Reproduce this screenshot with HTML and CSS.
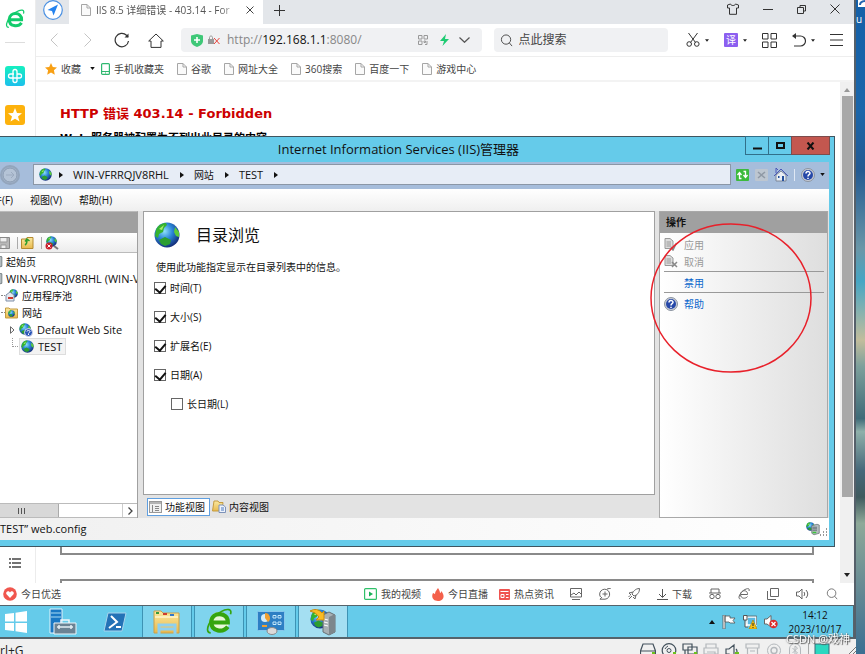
FILE: index.html
```html
<!DOCTYPE html>
<html lang="zh-CN">
<head>
    <meta charset="UTF-8">
    <meta name="viewport" content="width=device-width, initial-scale=1.0">
    <title>IIS 8.5 详细错误 - 403.14 - Forbidden</title>
    <link rel="stylesheet" href="styles.css">
</head>
<body>

    <!-- Shared icons -->
    <svg class="defs" aria-hidden="true">
        <defs>
            <radialGradient id="sea" cx="40%" cy="35%" r="70%">
                <stop offset="0" stop-color="#8fe0fb"/>
                <stop offset="0.45" stop-color="#2b86d8"/>
                <stop offset="1" stop-color="#10246f"/>
            </radialGradient>
            <linearGradient id="teal" x1="0" y1="0" x2="0" y2="1">
                <stop offset="0" stop-color="#16f0c0"/>
                <stop offset="1" stop-color="#1cc0ec"/>
            </linearGradient>
            <linearGradient id="paper" x1="0" y1="0" x2="0" y2="1">
                <stop offset="0" stop-color="#fbe9a0"/>
                <stop offset="1" stop-color="#e8b94c"/>
            </linearGradient>
        </defs>
        <symbol id="globe" viewBox="0 0 26 26">
            <circle cx="13" cy="13" r="12.5" fill="url(#sea)"/>
            <path d="M2 8C4 3 8 1 12 1L13 3L10 6L9 10L5 12L4 16L1 14Z" fill="#35b32f"/>
            <path d="M21 5L25 10L25 15L22 14L20 10Z" fill="#5ccb3a"/>
            <path d="M5 18L11 15L17 18L16 22L11 24L7 22Z" fill="#2c9e30"/>
            <path d="M5 7L10 3L8 8Z" fill="#a8ec6c"/>
        </symbol>
        <symbol id="doc" viewBox="0 0 10 12">
            <path d="M.5 .5H6L9.500 4V11.500H.5ZM6 .5V4H9.500" fill="#fafafa" stroke="#a6a6a6"/>
        </symbol>
        <symbol id="server" viewBox="0 0 12 14">
            <path d="M1 2L8 0L11 1V12L4 14L1 12Z" fill="#b4bcc0" stroke="#6a7478"/>
            <path d="M2 4H8M2 6H8M2 8H8" stroke="#53606a"/>
            <path d="M2 11H7" stroke="#3cc43c" stroke-width="2"/>
        </symbol>
        <symbol id="help" viewBox="0 0 14 14">
            <circle cx="7" cy="7" r="6.500" fill="#c8cdd6" stroke="#8c94a0"/>
            <circle cx="7" cy="7" r="5" fill="#2648a8"/>
            <path d="M5 5.500C5 3 9 3 9 5.300C9 6.800 7 6.600 7 8.500M7 9.700V11" fill="none" stroke="#fff" stroke-width="1.500"/>
        </symbol>
        <symbol id="caret" viewBox="0 0 6 4">
            <path d="M0 0H6L3 4Z" fill="currentColor"/>
        </symbol>
        <symbol id="arrow" viewBox="0 0 4 6">
            <path d="M0 0L4 3L0 6Z" fill="#111"/>
        </symbol>
        <symbol id="search" viewBox="0 0 14 14">
            <circle cx="6.500" cy="6" r="5" fill="none" stroke="currentColor"/>
            <path d="M10 9.500L13 13" stroke="currentColor"/>
        </symbol>
        <symbol id="browser-e" viewBox="0 0 26 26">
            <path d="M6 14H21.500C22 3.500 6 3 5.500 13.500C5.500 23 17 24 21.500 18" fill="none" stroke="currentColor" stroke-width="4"/>
            <path d="M5 24C-2 24 4 9 15 3.500C21 0 26 1 24 6" fill="none" stroke="currentColor" stroke-width="1.600"/>
        </symbol>
        <symbol id="browser-e-thin" viewBox="0 0 12 12">
            <path d="M3 6.500H9.500C10 1.500 3 1.500 2.500 6.500C2.500 11 8 11 9.500 8.500" fill="none" stroke="currentColor"/>
            <path d="M2.500 11C-1 11 2 4 7 1.500C10 0 12 .5 11 3" fill="none" stroke="currentColor"/>
        </symbol>
    </svg>

    <div class="screen">
        <div class="guest">

            <!-- Browser -->
            <div class="browser">
                <aside class="sidebar">
                    <a href="#" class="side-e" aria-label="浏览器"><svg width="20" height="22"><use href="#browser-e"/></svg></a>
                    <a href="#" class="side-tile" aria-label="健康">
                        <svg width="20" height="20" viewBox="0 0 20 20">
                            <rect width="20" height="20" rx="3" fill="url(#teal)"/>
                            <path d="M8 8V5.500A2 2 0 0 1 12 5.500V12M12 8H14.500A2 2 0 0 1 14.500 12H8M12 12V14.500A2 2 0 0 1 8 14.500V8M8 12H5.500A2 2 0 0 1 5.500 8H9" fill="none" stroke="#fff" stroke-width="1.300"/>
                        </svg>
                    </a>
                    <a href="#" class="side-tile" aria-label="收藏">
                        <svg width="20" height="20" viewBox="0 0 20 20">
                            <rect width="20" height="20" rx="3" fill="#fdb20c"/>
                            <path d="M10 3L12 8L17 8.300L13 11.500L14.500 16.500L10 13.700L5.500 16.500L7 11.500L3 8.300L8 8Z" fill="#fff"/>
                        </svg>
                    </a>
                    <button class="side-list" aria-label="列表">
                        <svg width="12" height="10" viewBox="0 0 12 10"><path d="M0 1H2M3 1H12M0 5H2M3 5H12M0 9H2M3 9H12" stroke="#444" stroke-width="1.500"/></svg>
                    </button>
                </aside>

                <div class="browser-main">
                    <div class="tabbar">
                        <button class="compass" aria-label="导航">
                            <svg width="20" height="20" viewBox="0 0 20 20"><circle cx="10" cy="10" r="9.300" fill="#fff" stroke="#4a90e2" stroke-width="1.200"/><path d="M15 4.500L4.500 10L9 11L10.500 15.500Z" fill="#2583ee"/></svg>
                        </button>
                        <div class="tab">
                            <svg width="10" height="12"><use href="#doc"/></svg>
                            <span class="tab-title">IIS 8.5 详细错误 - 403.14 - For</span>
                            <button aria-label="关闭标签">
                                <svg width="8" height="8" viewBox="0 0 8 8"><path d="M.5 .5L7.500 7.500M7.500 .5L.5 7.500" stroke="#444"/></svg>
                            </button>
                        </div>
                        <button class="new-tab" aria-label="新标签">
                            <svg width="11" height="11" viewBox="0 0 11 11"><path d="M5.500 0V11M0 5.500H11" stroke="#333"/></svg>
                        </button>
                        <div class="window-buttons">
                            <button aria-label="皮肤"><svg width="12" height="12" viewBox="0 0 12 12"><path d="M3.500 1C4 3 8 3 8.500 1L11.500 2V5H9.500V11.300H2.500V5H.5V2Z" fill="none" stroke="#333"/></svg></button>
                            <button aria-label="最小化"><svg width="12" height="12" viewBox="0 0 12 12"><path d="M1 6.500H11" stroke="#333"/></svg></button>
                            <button aria-label="还原"><svg width="10" height="10" viewBox="0 0 10 10"><path d="M.5 3.500H6.500V9.500H.5ZM3 3V1.500H8.500V7H7" fill="none" stroke="#333"/></svg></button>
                            <button aria-label="关闭"><svg width="10" height="10" viewBox="0 0 10 10"><path d="M.5 .5L9.500 9.500M9.500 .5L.5 9.500" stroke="#333"/></svg></button>
                        </div>
                    </div>

                    <div class="toolbar">
                        <div class="nav-buttons">
                            <button aria-label="后退"><svg width="8" height="14" viewBox="0 0 8 14"><path d="M7.500 .5L1 7L7.500 13.500" fill="none" stroke="#c4c4c4"/></svg></button>
                            <button aria-label="前进"><svg width="8" height="14" viewBox="0 0 8 14"><path d="M.5 .5L7 7L.5 13.500" fill="none" stroke="#c4c4c4"/></svg></button>
                            <button aria-label="刷新"><svg width="16" height="16" viewBox="0 0 16 16"><path d="M14.500 9A6.700 6.700 0 1 1 12.500 3.200L14 5" fill="none" stroke="#333" stroke-width="1.200"/><path d="M14.500 1.500V5.500H10.500Z" fill="#333"/></svg></button>
                            <button aria-label="主页"><svg width="16" height="15" viewBox="0 0 16 15"><path d="M.7 8L8 1L15.300 8H13V14.400H3V8Z" fill="none" stroke="#333"/></svg></button>
                        </div>
                        <div class="address">
                            <svg width="12" height="13" viewBox="0 0 12 13"><path d="M0 1.500L6 0L12 1.500V7C12 10 9 12 6 13C3 12 0 10 0 7Z" fill="#3fc878"/><path d="M6 3V9M3 6H9" stroke="#fff" stroke-width="1.600"/></svg>
                            <svg width="12" height="10" viewBox="0 0 12 10"><path d="M0 4H6V9H0Z" fill="#999"/><path d="M1.500 4V2.500C1.500 .5 4.500 .5 4.500 2.500V4" fill="none" stroke="#999"/><path d="M6 3L11.500 9M11.500 3L6 9" stroke="#e8443c"/></svg>
                            <label class="url"><span>http://</span><input type="text" value="192.168.1.1" aria-label="地址"><span>:8080/</span></label>
                            <svg width="10" height="10" viewBox="0 0 10 10"><path d="M.5 .5H4V4H.5ZM6 .5H9.500V4H6ZM.5 6H4V9.500H.5ZM6 6H7.500V7.500H6ZM9 6V9.500H7" fill="none" stroke="#999"/></svg>
                            <svg class="bolt" width="9" height="12" viewBox="0 0 9 12"><path d="M6 0L0 7H4L2.500 12L9 5H5Z" fill="#1ecb72"/></svg>
                            <button aria-label="展开地址"><svg width="11" height="6" viewBox="0 0 11 6"><path d="M.5 .5L5.500 5.300L10.500 .5" fill="none" stroke="#555" stroke-width="1.200"/></svg></button>
                        </div>
                        <label class="search-box">
                            <svg width="13" height="13"><use href="#search"/></svg>
                            <input type="text" value="点此搜索" aria-label="搜索">
                        </label>
                        <div class="tools">
                            <button aria-label="截图">
                                <svg width="14" height="14" viewBox="0 0 14 14"><path d="M2.500 0L9.500 9.500M11.500 0L4.500 9.500" stroke="#333"/><circle cx="3.200" cy="11" r="2.300" fill="none" stroke="#333"/><circle cx="10.800" cy="11" r="2.300" fill="none" stroke="#333"/></svg>
                                <svg width="4" height="3"><use href="#caret"/></svg>
                            </button>
                            <button aria-label="翻译">
                                <span class="translate">译</span>
                                <svg width="4" height="3"><use href="#caret"/></svg>
                            </button>
                            <button aria-label="应用"><svg width="15" height="15" viewBox="0 0 15 15"><path d="M.5 .5H6V6H.5ZM9 .5H14.500V6H9ZM.5 9H6V14.500H.5ZM9 9H14.500V14.500H9Z" fill="none" stroke="#333"/></svg></button>
                            <button aria-label="撤销">
                                <svg width="14" height="14" viewBox="0 0 14 14"><path d="M1 3H8.500A5 5 0 0 1 8.500 13H2" fill="none" stroke="#333" stroke-width="1.200"/><path d="M0 3L4 0V6Z" fill="#333"/></svg>
                                <svg width="4" height="3"><use href="#caret"/></svg>
                            </button>
                            <button aria-label="菜单"><svg width="13" height="12" viewBox="0 0 13 12"><path d="M0 .5H13M0 6H13M0 11.500H13" stroke="#333"/></svg></button>
                        </div>
                    </div>

                    <nav class="bookmarks">
                        <a href="#"><svg width="12" height="12" viewBox="0 0 12 12"><path d="M6 0L7.800 4L12 4.400L8.900 7.300L9.800 11.700L6 9.400L2.200 11.700L3.100 7.300L0 4.400L4.200 4Z" fill="#f8a014"/></svg>收藏</a>
                        <svg class="fav-caret" width="5" height="3"><use href="#caret"/></svg>
                        <a href="#"><svg width="9" height="12" viewBox="0 0 9 12"><rect x=".6" y=".6" width="7.800" height="10.800" rx="1" fill="none" stroke="#30b870" stroke-width="1.200"/><path d="M1 8.500H8M4 10H5" stroke="#30b870"/></svg>手机收藏夹</a>
                        <a href="#"><svg width="10" height="12"><use href="#doc"/></svg>谷歌</a>
                        <a href="#"><svg width="10" height="12"><use href="#doc"/></svg>网址大全</a>
                        <a href="#"><svg width="10" height="12"><use href="#doc"/></svg>360搜索</a>
                        <a href="#"><svg width="10" height="12"><use href="#doc"/></svg>百度一下</a>
                        <a href="#"><svg width="10" height="12"><use href="#doc"/></svg>游戏中心</a>
                    </nav>

                    <div class="viewport">
                        <main class="error-page">
                            <h1>HTTP 错误 403.14 - Forbidden</h1>
                            <h2>Web 服务器被配置为不列出此目录的内容。</h2>
                            <div class="error-box"></div>
                            <div class="error-box next"></div>
                        </main>
                        <div class="scrollbar">
                            <svg width="6" height="4" viewBox="0 0 6 4"><path d="M0 4L3 0L6 4Z" fill="#999"/></svg>
                            <div class="thumb"></div>
                            <svg class="down" width="6" height="4"><use href="#caret"/></svg>
                        </div>
                    </div>
                </div>
            </div>

            <div class="bottom-bar">
                <a href="#"><svg width="14" height="14" viewBox="0 0 14 14"><circle cx="7" cy="7" r="6.800" fill="#f0564e"/><path d="M7 11L3.500 7.200C2 5 5.500 2.800 7 5.400C8.500 2.800 12 5 10.500 7.200Z" fill="#fff"/></svg>今日优选</a>
                <div class="bottom-right">
                    <a href="#"><svg width="13" height="12" viewBox="0 0 13 12"><rect x=".6" y=".6" width="11.800" height="10.800" rx="1" fill="none" stroke="#2fc069" stroke-width="1.200"/><path d="M5 3.500L9 6L5 8.500Z" fill="#18b056"/></svg>我的视频</a>
                    <a href="#"><svg width="12" height="13" viewBox="0 0 12 13"><path d="M6 0C7 2 8 3 8 5C9 5 9 4 9 3C14 8 11 13 6 13C1 13-1 9 1 5C2 5 2 6 3 6C3 3 5 2 6 0Z" fill="#f4604a"/></svg>今日直播</a>
                    <a href="#"><svg width="11" height="11" viewBox="0 0 11 11"><rect width="11" height="11" rx="1" fill="#ef5350"/><path d="M1.500 2.500H9.500M7 5.500H9.500M7 8.500H9.500M2 5.500H5V8.500H2Z" fill="none" stroke="#fff"/></svg>热点资讯</a>
                    <div class="bottom-tools">
                        <button aria-label="图片"><svg width="12" height="12" viewBox="0 0 12 12"><path d="M.5 .5H11.500V9H.5ZM1 7L4 5L6 7L9 4L11 6M2 11.500H10" fill="none" stroke="#666"/></svg></button>
                        <button aria-label="加速"><svg width="12" height="12" viewBox="0 0 12 12"><path d="M1.500 9A5 5 0 1 1 6 11.200H1L3 9M6 3.500V8.500M3.500 6H8.500M8 1L12 0" fill="none" stroke="#666"/></svg></button>
                        <button aria-label="火箭"><svg width="12" height="12" viewBox="0 0 12 12"><path d="M11.500 .5C7 .5 5 4 4 6L6 8C9 7 11.500 5 11.500 .5ZM5 4L1 5L3 7M8 7L7 11L5 9M1 11L4 8M.5 9L2 7.500" fill="none" stroke="#666"/></svg></button>
                        <button class="download"><svg width="11" height="11" viewBox="0 0 11 11"><path d="M5.500 0V8M2 5L5.500 8.500L9 5M0 10.500H11" fill="none" stroke="#555"/></svg>下载</button>
                        <button aria-label="无痕"><svg width="12" height="12" viewBox="0 0 12 12"><path d="M2 5V1H10V5M0 5H12" fill="none" stroke="#666"/><circle cx="3" cy="8.500" r="2.200" fill="none" stroke="#666"/><circle cx="9" cy="8.500" r="2.200" fill="none" stroke="#666"/></svg></button>
                        <button class="grey" aria-label="内核"><svg width="12" height="12"><use href="#browser-e-thin"/></svg></button>
                        <button aria-label="窗口"><svg width="12" height="12" viewBox="0 0 12 12"><path d="M3.500 .5H11.500V8.500H3.500ZM.5 3V11.500H9" fill="none" stroke="#666"/></svg></button>
                        <button aria-label="声音"><svg width="13" height="12" viewBox="0 0 13 12"><path d="M.5 4H3L6 1V11L3 8H.5ZM8 4Q9.500 6 8 8M10 2Q13.500 6 10 10" fill="none" stroke="#666"/></svg></button>
                        <button class="grey" aria-label="查找"><svg width="12" height="12"><use href="#search"/></svg></button>
                    </div>
                </div>
            </div>

            <!-- IIS manager window -->
            <section class="iis">
                <header class="iis-title">
                    <span>Internet Information Services (IIS)管理器</span>
                    <div class="caption-buttons">
                        <button aria-label="最小化"><svg width="9" height="8" viewBox="0 0 9 8"><path d="M0 6.500H9" stroke="#111" stroke-width="2"/></svg></button>
                        <button aria-label="最大化"><svg width="9" height="7" viewBox="0 0 9 7"><path d="M1 1H8V6H1Z" fill="none" stroke="#111" stroke-width="2"/></svg></button>
                        <button class="close" aria-label="关闭"><svg width="9" height="8" viewBox="0 0 9 8"><path d="M1.500 .5L7.500 7.500M7.500 .5L1.500 7.500" stroke="#111" stroke-width="2"/></svg></button>
                    </div>
                </header>

                <div class="iis-frame">
                    <div class="iis-address">
                        <button class="forward" aria-label="前进"><svg width="20" height="20" viewBox="0 0 20 20"><circle cx="10" cy="10" r="9" fill="#a3b4cb" stroke="#93a5bc" stroke-width="2"/><circle cx="10" cy="10" r="7" fill="#b4c3d6" stroke="#8b9cb2"/><path d="M6 10H14M11 7L14 10L11 13" fill="none" stroke="#9cabc0"/></svg></button>
                        <nav class="crumbs">
                            <svg width="13" height="13"><use href="#globe"/></svg>
                            <svg width="4" height="6"><use href="#arrow"/></svg>
                            <a href="#" class="latin">WIN-VFRRQJV8RHL</a>
                            <svg width="4" height="6"><use href="#arrow"/></svg>
                            <a href="#">网站</a>
                            <svg width="4" height="6"><use href="#arrow"/></svg>
                            <a href="#" class="latin">TEST</a>
                            <svg width="4" height="6"><use href="#arrow"/></svg>
                        </nav>
                        <div class="iis-tools">
                            <button aria-label="刷新"><svg width="13" height="12" viewBox="0 0 13 12"><rect width="13" height="12" rx="1" fill="#3cba3c"/><path d="M5.500 9.500H3.500V4M1.500 6L3.500 3.500L5.500 6M7.500 2.500H9.500V8M7.500 6L9.500 8.500L11.500 6" fill="none" stroke="#fff" stroke-width="1.300"/></svg></button>
                            <button aria-label="停止" disabled><svg width="13" height="12" viewBox="0 0 13 12"><rect width="13" height="12" rx="1" fill="#bdc6d0"/><path d="M3 3L10 9M10 3L3 9" stroke="#8f99a5" stroke-width="1.500"/></svg></button>
                            <button aria-label="主页"><svg width="14" height="14" viewBox="0 0 14 14"><path d="M2 7V13H12V7L7 3Z" fill="#e8edf4" stroke="#7d8798"/><path d="M2 5V0L4 2M0 8L7 1L14 8" fill="none" stroke="#4a58b8"/><path d="M8 8H10V13H8ZM4 8H5.500V10H4Z" fill="#24509c"/></svg></button>
                            <span class="sep"></span>
                            <button class="help" aria-label="帮助"><svg width="14" height="14"><use href="#help"/></svg><svg width="5" height="3"><use href="#caret"/></svg></button>
                        </div>
                    </div>

                    <div class="iis-menu">
                        <button class="cut">件(F)</button>
                        <button>视图(V)</button>
                        <button>帮助(H)</button>
                    </div>

                    <div class="iis-body">
                        <aside class="connections">
                            <div class="pane-head"></div>
                            <div class="tree-tools">
                                <button aria-label="保存"><svg width="10" height="12" viewBox="0 0 10 12"><path d="M-3 .5H9.500V11.500H-3Z" fill="#b8b8b8" stroke="#888"/><path d="M0 1V5H7V1M1 11V8H6V11" fill="#eee" stroke="#999"/></svg></button>
                                <span class="sep"></span>
                                <button aria-label="上移"><svg width="13" height="13" viewBox="0 0 13 13"><path d="M.5 3H5L6 1.500H12V12.500H.5Z" fill="url(#paper)" stroke="#b48a30"/><path d="M4 9Q6 8 6 4M4 5.500L6 3L8.500 5" fill="none" stroke="#2d9e2d" stroke-width="1.500"/></svg></button>
                                <span class="sep"></span>
                                <button aria-label="断开"><svg width="14" height="14" viewBox="0 0 14 14"><use href="#globe" width="11" height="11" x="1"/><path d="M9 10L13 13" stroke="#777" stroke-width="2"/><circle cx="4" cy="10" r="3.500" fill="#c8202c"/><path d="M2.500 8.500L5.500 11.500M5.500 8.500L2.500 11.500" stroke="#fff"/></svg></button>
                            </div>
                            <ul class="tree">
                                <li><svg class="edge" width="3" height="12" viewBox="9 0 3 14"><use href="#server" width="12" height="14"/></svg>起始页</li>
                                <li class="latin"><svg class="edge" width="3" height="12" viewBox="9 0 3 14"><use href="#server" width="12" height="14"/></svg>WIN-VFRRQJV8RHL (WIN-V</li>
                                <li class="level-1"><i class="stub"></i><svg width="13" height="13" viewBox="0 0 13 13"><use href="#globe" width="9" height="9" x="4"/><path d="M1 6L5 3L9 6V12H1Z" fill="#e4e9f0" stroke="#8090a8"/><path d="M3 9H8" stroke="#cc3a30" stroke-width="2"/></svg>应用程序池</li>
                                <li class="level-1"><i class="stub"></i><svg width="13" height="13" viewBox="0 0 13 13"><path d="M.5 2H4L5 3H12.500V12H.5Z" fill="url(#paper)" stroke="#c49b40"/><use href="#globe" width="7" height="7" x="3" y="4"/></svg>网站</li>
                                <li class="level-2 latin"><svg width="5" height="8" viewBox="0 0 5 8"><path d="M.5 .7L4 4L.5 7.300Z" fill="#fff" stroke="#666"/></svg><svg width="14" height="14" viewBox="0 0 14 14"><use href="#globe" width="12" height="12"/><circle cx="9.500" cy="9.500" r="4" fill="#2c58b8" stroke="#dde"/><path d="M8 8.500C8 7 11 7 11 8.700C11 9.500 9.500 9.500 9.500 10.500M9.500 11V12" fill="none" stroke="#fff"/></svg>Default Web Site</li>
                                <li class="level-2 latin"><i class="elbow"></i><span class="selected"><svg width="13" height="13"><use href="#globe"/></svg>TEST</span></li>
                            </ul>
                            <div class="h-scroll">
                                <div class="h-thumb"><svg width="7" height="6" viewBox="0 0 7 6"><path d="M.5 0V6M3.500 0V6M6.500 0V6" stroke="#555"/></svg></div>
                                <button aria-label="向右滚动"><svg width="5" height="8" viewBox="0 0 5 8"><path d="M.5 .5L4 4L.5 7.500" fill="none" stroke="#444" stroke-width="1.300"/></svg></button>
                            </div>
                        </aside>

                        <div class="feature">
                            <form class="feature-page">
                                <div class="feature-head">
                                    <svg width="26" height="26"><use href="#globe"/></svg>
                                    <h3>目录浏览</h3>
                                </div>
                                <p>使用此功能指定显示在目录列表中的信息。</p>
                                <label><input type="checkbox" checked>时间(T)</label>
                                <label><input type="checkbox" checked>大小(S)</label>
                                <label><input type="checkbox" checked>扩展名(E)</label>
                                <label><input type="checkbox" checked>日期(A)</label>
                                <label class="indent"><input type="checkbox">长日期(L)</label>
                            </form>
                            <div class="view-tabs">
                                <button class="active"><svg width="13" height="12" viewBox="0 0 13 12"><rect x=".5" y=".5" width="12" height="11" fill="#f0f0f0" stroke="#999"/><path d="M1 2H12" stroke="#b4b4b4" stroke-width="2"/><path d="M3.500 4V11M6 5.500H10M6 7.500H10M6 9.500H10" stroke="#888"/></svg>功能视图</button>
                                <button><svg width="14" height="13" viewBox="0 0 14 13"><path d="M.5 11L2 1H6L7 2.500H11L10 11Z" fill="url(#paper)" stroke="#c49b40"/><path d="M7 5H11L13.500 7V12.500H7Z" fill="#eef3fb" stroke="#7d92b8"/><path d="M9 8H12M9 10H12" stroke="#4a78c0"/></svg>内容视图</button>
                            </div>
                        </div>

                        <aside class="actions">
                            <div class="pane-head">操作</div>
                            <div class="action-list">
                                <button disabled><svg width="14" height="13" viewBox="0 0 14 13"><path d="M1 .5H6L9 3V10.500H1ZM2.500 4H7M2.500 6H7M2.500 8H7" fill="#ddd" stroke="#999"/><path d="M7 9L9 12L12.500 5" fill="none" stroke="#888" stroke-width="1.500"/></svg>应用</button>
                                <button disabled><svg width="14" height="13" viewBox="0 0 14 13"><path d="M1 .5H6L9 3V10.500H1ZM2.500 4H7M2.500 6H7M2.500 8H7" fill="#ddd" stroke="#999"/><path d="M8 7L13 12M13 7L8 12" stroke="#888" stroke-width="1.500"/></svg>取消</button>
                                <hr>
                                <a href="#" class="no-icon">禁用</a>
                                <hr>
                                <a href="#"><svg width="14" height="14"><use href="#help"/></svg>帮助</a>
                            </div>
                            <svg class="marker" viewBox="0 0 162 150"><ellipse cx="81" cy="75" rx="80" ry="74" fill="none" stroke="#e8202a" stroke-width="1.500"/></svg>
                        </aside>
                    </div>

                    <footer class="iis-status">
                        <span class="latin">TEST” web.config</span>
                        <svg width="22" height="15" viewBox="0 0 22 15"><use href="#globe" width="9" height="9"/><use href="#server" width="9" height="13" x="5" y="1"/><path d="M20 7H21M17 10H18M20 10H21M14 13H15M17 13H18M20 13H21" stroke="#777" stroke-width="1.500"/></svg>
                    </footer>
                </div>
            </section>

            <!-- Windows taskbar -->
            <div class="taskbar">
                <button class="start" aria-label="开始"><svg width="24" height="22" viewBox="0 0 24 22"><path d="M1 3L10 2V10.500H1ZM11.500 1.800L23 0V10.500H11.500ZM1 12H10V20L1 19ZM11.500 12H23V22L11.500 20.300Z" fill="#fff"/></svg></button>
                <button class="task" aria-label="服务器管理器"><svg width="28" height="28" viewBox="0 0 28 28"><path d="M1 1H13V25H1Z" fill="#1878c4" stroke="#e4f4fc"/><path d="M2 5H12M2 9H12" stroke="#a8dcf4"/><path d="M5 15H27V26H5Z" fill="#6b8394" stroke="#eef6fa"/><path d="M12 15V12H20V15" fill="none" stroke="#eef6fa" stroke-width="1.500"/><path d="M8 19H24M10 17V21M22 17V21" stroke="#e4eef4" stroke-width="1.500"/></svg></button>
                <button class="task" aria-label="PowerShell"><svg width="24" height="20" viewBox="0 0 24 20"><path d="M5 1H23L19 19H1Z" fill="#2372b6" stroke="#a8d4ec"/><path d="M8 4L14 10L6 16M13 15H18" fill="none" stroke="#fff" stroke-width="2"/></svg></button>
                <button class="task open" aria-label="文件资源管理器"><svg width="28" height="26" viewBox="0 0 28 26"><path d="M1 2H8L10 4H26V24H1Z" fill="url(#paper)" stroke="#c9a04c"/><path d="M3 4H6" stroke="#3a9a3a" stroke-width="2"/><path d="M10 5H14" stroke="#d03c2e" stroke-width="2"/><path d="M17 6H21" stroke="#3478c8" stroke-width="2"/><path d="M2 8H25" stroke="#fff6cc" stroke-width="1.500"/><path d="M6 25V16H22V25M6 20H22" fill="none" stroke="#8ed0f0" stroke-width="3"/></svg></button>
                <button class="task open green" aria-label="360浏览器"><svg width="28" height="27"><circle cx="14" cy="14" r="10" fill="#e8f8d8"/><use href="#browser-e"/></svg></button>
                <button class="task open" aria-label="控制面板"><svg width="28" height="26" viewBox="0 0 28 26"><rect x=".5" y="2.500" width="27" height="19" rx="1" fill="#2d7fc4" stroke="#88c8ec"/><circle cx="8" cy="9" r="4" fill="#d4ecf8"/><path d="M8 9V4A5 5 0 0 1 11 13Z" fill="#f0a030"/><path d="M16 6.500H19V9H16ZM21 6.500H24V9H21ZM16 13H19V15.500H16ZM21 13H24V15.500H21Z" fill="none" stroke="#c4e8fa"/><path d="M5 17H10" stroke="#f0a030" stroke-width="2"/><ellipse cx="15" cy="22" rx="5" ry="3.500" fill="#dadada" stroke="#888"/></svg></button>
                <button class="task open current" aria-label="IIS 管理器"><svg width="28" height="28" viewBox="0 0 28 28"><use href="#globe" width="20" height="20" x="1" y="1"/><path d="M14 7L20 4L26 7V24L20 27L14 24Z" fill="#a8b0b4" stroke="#667074"/><path d="M20 9V27L26 24V6Z" fill="#7d878c"/><path d="M15 11L19 12M15 14L19 15M15 17L19 18" stroke="#fff"/><path d="M1 3Q8-1 13 5L15 3V12H7L10 9Q7 4 1 3Z" fill="#f8bc24" stroke="#c88a10"/></svg></button>
                <div class="tray">
                    <button aria-label="显示隐藏的图标"><svg width="6" height="4" viewBox="0 0 6 4"><path d="M0 4L3 0L6 4Z" fill="#111"/></svg></button>
                    <button aria-label="操作中心"><svg width="14" height="14" viewBox="0 0 14 14"><path d="M1 0H3V14H1ZM3 1H8V3H13L11 5.500L13 8H8L7 7H3Z" fill="#fff" stroke="#555" stroke-width=".8"/></svg></button>
                    <button aria-label="网络"><svg width="14" height="14" viewBox="0 0 14 14"><path d="M4 2H13V10H4Z" fill="#5cb8e0" stroke="#fff" stroke-width="1.500"/><path d="M3.500 1H13.700V10" fill="none" stroke="#555" stroke-width=".7"/><path d="M.5 .5H4V5H.5ZM2 5V12H5" fill="#fff" stroke="#555"/><path d="M10 5L14 14H6Z" fill="#fbc414" stroke="#a87800" stroke-width=".6"/><path d="M10 8V11M10 12V13" stroke="#222"/></svg></button>
                    <button aria-label="音量"><svg width="14" height="14" viewBox="0 0 14 14"><path d="M.5 4H3L7 .5V12L3 9H.5Z" fill="#fff" stroke="#666"/><circle cx="9.500" cy="9" r="4.200" fill="#dc2b2b"/><path d="M7.500 7L11.500 11M11.500 7L7.500 11" stroke="#fff" stroke-width="1.300"/></svg></button>
                    <div class="clock"><span>14:12</span><span>2023/10/17</span></div>
                </div>
            </div>
        </div>

        <!-- Wallpaper seen beside the virtual machine -->
        <div class="wallpaper">
            <svg width="9" height="8" viewBox="0 0 9 8"><path d="M1 0H9V7H1Z" fill="#fff"/><path d="M3 5Q3 1 9 1" fill="none" stroke="#2465b0" stroke-width="2"/></svg>
            <span>u</span>
        </div>
    </div>

    <!-- Virtual machine status bar -->
    <footer class="vm-bar">
        <span>rl+G</span>
        <div class="devices">
            <svg width="16" height="14" viewBox="0 0 16 14"><path d="M3 1H13L15.500 8V13H.5V8ZM.5 8H15.500" fill="none" stroke="#43515c" stroke-width="1.200"/><path d="M12 10H15" stroke="#6dc21e" stroke-width="2"/></svg>
            <svg width="16" height="14" viewBox="0 0 16 14"><circle cx="8" cy="7.500" r="6.800" fill="none" stroke="#43515c" stroke-width="1.200"/><circle cx="8" cy="7.500" r="2" fill="none" stroke="#43515c"/><path d="M4 6Q5 4 7 3" stroke="#43515c" fill="none"/><path d="M12 10H15" stroke="#6dc21e" stroke-width="2"/></svg>
            <svg width="16" height="14" viewBox="0 0 16 14"><path d="M1 1H10V7H1ZM6 4H15V11H6ZM3 7V12M1 12H6" fill="#f0f0f0" stroke="#43515c" stroke-width="1.200"/><path d="M12 10H15" stroke="#6dc21e" stroke-width="2"/></svg>
            <svg width="16" height="14" viewBox="0 0 16 14"><path d="M3 5V1H13V5M1 5H15V11H1ZM4 9H12V14" fill="none" stroke="#b4b8bc" stroke-width="1.200"/></svg>
            <svg width="16" height="14" viewBox="0 0 16 14"><path d="M2 6H5L10 2V14L5 11H2ZM12 6Q14 8 12 11" fill="none" stroke="#43515c" stroke-width="1.200"/><path d="M11 10H15" stroke="#6dc21e" stroke-width="2"/></svg>
            <svg width="16" height="14" viewBox="0 0 16 14"><path d="M1 1H14V5H1ZM2.500 5V14M12.500 5V14M5 8H10" fill="none" stroke="#b4b8bc" stroke-width="1.200"/></svg>
            <svg width="16" height="14" viewBox="0 0 16 14"><circle cx="8" cy="7.500" r="6.500" fill="none" stroke="#b4b8bc"/><circle cx="8" cy="7.500" r="3" fill="none" stroke="#b4b8bc" stroke-width="1.500"/></svg>
            <svg width="16" height="14" viewBox="0 0 16 14"><rect x="2.500" y=".5" width="11" height="16" rx="5.500" fill="none" stroke="#b4b8bc"/><path d="M5.500 5L10.500 10L8 12V3L10.500 5L5.500 10" fill="none" stroke="#b4b8bc"/></svg>
            <span class="sep"></span>
            <svg class="note" width="16" height="14" viewBox="0 0 16 14"><path d="M1 1H15V14H1Z" fill="#2bd8c0" stroke="#3a6a78"/></svg>
            <svg width="8" height="12" viewBox="0 0 8 12"><path d="M0 12L8 4M4 12L8 8" stroke="#777"/></svg>
        </div>
    </footer>

    <div class="watermark">CSDN @戏神</div>

</body>
</html>
```
FILE: styles.css
```css
* {
    box-sizing: border-box;
}

html, body {
    margin: 0;
    padding: 0;
    height: 100%;
    overflow: hidden;
}

body {
    display: flex;
    flex-direction: column;
    font-family: "Open Sans", "Noto Sans CJK SC", sans-serif;
    font-size: 10px;
    line-height: 14px;
    color: #222;
    background-color: #f0f0f0;
}

button, input {
    margin: 0;
    padding: 0;
    border: 0;
    background: none;
    font: inherit;
    color: inherit;
    outline: none;
}

button {
    display: flex;
    align-items: center;
    justify-content: center;
}

a {
    color: inherit;
    text-decoration: none;
}

svg {
    display: block;
    flex: none;
}

.defs {
    position: absolute;
    width: 0;
    height: 0;
}

.latin {
    font-size: 11px;
}

.screen {
    display: flex;
    flex: 1;
    min-height: 0;
    margin-bottom: -15px;
}

.guest {
    position: relative;
    display: flex;
    flex-direction: column;
    flex: 1;
    min-width: 0;
    margin-bottom: 15px;
    background-color: #fff;
}

/* Browser */
.browser {
    display: flex;
    flex: 1;
    min-height: 0;
}

.sidebar {
    display: flex;
    flex-direction: column;
    align-items: center;
    width: 36px;
    padding: 8px 5px 15px 0;
    border-right: 1px solid #ececec;
}

.side-e {
    height: 35px;
    margin-bottom: 23px;
    color: #12cc6c;
    border-bottom: 1px solid #ddd;
}

.side-tile {
    margin-bottom: 19px;
}

.side-list {
    margin-top: auto;
}

.browser-main {
    display: flex;
    flex-direction: column;
    flex: 1;
    min-width: 0;
}

.tabbar {
    display: flex;
    height: 24px;
    background-color: #e3e6ea;
}

.compass {
    width: 33px;
    padding-bottom: 4px;
}

.tab {
    display: flex;
    align-items: center;
    gap: 5px;
    width: 194px;
    padding: 0 9px 4px 12px;
    background-color: #fff;
    color: #555;
}

.tab-title {
    flex: 1;
    overflow: hidden;
    white-space: nowrap;
    mask-image: linear-gradient(to right, #000 85%, transparent);
}

.new-tab {
    width: 33px;
    padding-bottom: 4px;
}

.window-buttons {
    display: flex;
    gap: 23px;
    margin-left: auto;
    padding: 0 14px 6px 0;
}

.toolbar {
    display: flex;
    align-items: center;
    height: 33px;
    padding: 0 11px 0 1px;
    border-bottom: 1px solid #eee;
}

.nav-buttons {
    display: flex;
    margin-right: 8px;
}

.nav-buttons button {
    width: 34px;
}

.address {
    display: flex;
    align-items: center;
    gap: 5px;
    flex: 12 1 0;
    height: 24px;
    padding: 0 12px 0 10px;
    border-radius: 4px;
    background-color: #f0f1f3;
}

.address button {
    margin-left: 5px;
}

.address .bolt {
    margin-left: 7px;
}

.url {
    display: flex;
    flex: 1;
    padding-left: 2px;
    font-size: 12px;
    line-height: 16px;
    color: #888;
}

.url input {
    field-sizing: content;
    color: #111;
}

.search-box {
    display: flex;
    align-items: center;
    gap: 6px;
    flex: 7 1 0;
    min-width: 0;
    height: 24px;
    margin-left: 12px;
    padding: 0 6px;
    border-radius: 4px;
    background-color: #f0f1f3;
    font-size: 12px;
    color: #444;
}

.search-box input {
    flex: 1;
    min-width: 0;
}

.tools {
    display: flex;
    align-items: center;
    gap: 15px;
    margin-left: 18px;
    color: #222;
}

.tools button {
    gap: 5px;
}

.translate {
    width: 14px;
    border-radius: 1px;
    background-color: #8c5ff0;
    color: #fff;
}

.bookmarks {
    display: flex;
    align-items: center;
    gap: 13px;
    height: 25px;
    padding-left: 9px;
    border-bottom: 2px solid #f3f3f3;
    color: #444;
}

.bookmarks a {
    display: flex;
    align-items: center;
    gap: 4px;
    white-space: nowrap;
}

.fav-caret {
    margin: 0 -7px 0 -4px;
    color: #111;
}

.viewport {
    display: flex;
    flex: 1;
    min-height: 0;
}

.error-page {
    display: flex;
    flex-direction: column;
    flex: 1;
    padding: 22px 26px 0 24px;
    font-family: "DejaVu Sans", "Noto Sans CJK SC", sans-serif;
}

.error-page h1 {
    margin: 0 0 7px;
    font-size: 13px;
    line-height: 20px;
    color: #c00;
}

.error-page h2 {
    margin: 0 0 4px;
    font-size: 11px;
    line-height: 16px;
    color: #000;
}

.error-box {
    flex: 1;
    margin-bottom: 24px;
    border: 2px solid #8a8a8a;
}

.error-box.next {
    flex: none;
    height: 4px;
    margin: 0;
    border-bottom: 0;
}

.scrollbar {
    display: flex;
    flex-direction: column;
    align-items: center;
    width: 14px;
    padding: 6px 1px;
    background-color: #f0f0f0;
}

.thumb {
    width: 11px;
    height: 82%;
    margin-top: 4px;
    background-color: #a8a8a8;
}

.down {
    margin-top: auto;
}

.bottom-bar {
    display: flex;
    align-items: center;
    justify-content: space-between;
    height: 22px;
    padding: 0 16px 0 3px;
    background-color: #fff;
    color: #444;
}

.bottom-bar a {
    display: flex;
    align-items: center;
    gap: 4px;
    white-space: nowrap;
}

.bottom-right, .bottom-tools {
    display: flex;
    align-items: center;
}

.bottom-right {
    gap: 11px;
}

.bottom-tools {
    gap: 17px;
    margin-left: 5px;
}

.download {
    gap: 4px;
}

.grey {
    color: #666;
}

/* IIS manager */
.iis {
    position: absolute;
    top: 136px;
    right: 19px;
    bottom: 92px;
    left: 0;
    display: flex;
    flex-direction: column;
    padding: 0 5px 6px 0;
    border: 1px solid #3f5560;
    border-left: 0;
    background-color: #65cbea;
    color: #111;
}

.iis-title {
    position: relative;
    height: 25px;
    font-size: 13px;
    line-height: 24px;
    text-align: center;
}

.iis-title span {
    padding-right: 32px;
}

.caption-buttons {
    position: absolute;
    top: -1px;
    right: -1px;
    display: flex;
}

.caption-buttons button {
    width: 23px;
    height: 19px;
    border: 1px solid #31708a;
    border-right: 0;
}

.caption-buttons .close {
    width: 39px;
    border: 1px solid #7c4c4c;
    background-color: #c3574f;
}

.iis-frame {
    display: flex;
    flex-direction: column;
    flex: 1;
    min-height: 0;
    background-color: #f0f0f0;
}

.iis-address {
    display: flex;
    align-items: center;
    height: 27px;
    padding: 0 4px 2px 0;
    background-color: #a6bddb;
}

.forward {
    width: 33px;
    justify-content: flex-start;
    overflow: hidden;
}

.crumbs {
    display: flex;
    align-items: center;
    gap: 10px;
    flex: 1;
    height: 21px;
    padding-left: 5px;
    border: 1px solid #8b97a6;
    background-color: #e7edf6;
}

.crumbs svg:first-child {
    margin-right: -3px;
}

.crumbs a + svg {
    margin-left: 1px;
}

.iis-tools {
    display: flex;
    align-items: center;
    gap: 6px;
    margin-left: 5px;
}

.sep {
    width: 1px;
    height: 12px;
    background-color: #aaa;
}

.iis-tools .sep {
    background-color: #dfe8f4;
}

.help {
    gap: 5px;
}

.iis-menu {
    display: flex;
    gap: 17px;
    height: 22px;
    background: linear-gradient(#fff, #efefef);
}

.iis-menu .cut {
    width: 13px;
    justify-content: flex-end;
    overflow: hidden;
    white-space: nowrap;
}

.iis-body {
    display: flex;
    flex: 1;
    min-height: 0;
    background-color: #e3e3e3;
}

.connections {
    display: flex;
    flex-direction: column;
    width: 138px;
    border-top: 1px solid #bbb;
    border-right: 1px solid #a0a0a0;
    background-color: #fff;
}

.pane-head {
    height: 21px;
    padding-left: 6px;
    background-color: #a0a0a0;
    font-weight: bold;
    line-height: 21px;
}

.tree-tools {
    display: flex;
    align-items: center;
    gap: 3px;
    height: 20px;
    border-bottom: 1px solid #bbb;
    background: linear-gradient(#fff, #ececec);
}

.tree-tools .sep {
    margin-left: 4px;
}

.tree {
    flex: 1;
    margin: 0;
    padding: 0;
    overflow: hidden;
    list-style: none;
    white-space: nowrap;
}

.tree li {
    display: flex;
    align-items: center;
    gap: 4px;
    height: 17px;
}

.edge {
    margin-right: -1px;
}

.tree .level-1 {
    padding-left: 1px;
}

.stub {
    width: 4px;
    margin-right: -8px;
    border-top: 1px dotted #888;
}

.tree .stub + svg {
    margin-left: 4px;
}

.tree .level-2 {
    padding-left: 10px;
}

.elbow {
    align-self: flex-start;
    width: 6px;
    height: 9px;
    margin: 0 -2px 0 2px;
    border: 1px dotted #999;
    border-width: 0 0 1px 1px;
}

.selected {
    display: flex;
    align-items: center;
    gap: 4px;
    height: 17px;
    margin-left: -1px;
    padding: 0 3px 0 1px;
    border: 1px solid #ddd;
    background-color: #f3f3f3;
}

.h-scroll {
    display: flex;
    justify-content: space-between;
    height: 15px;
    border: 1px solid #bbb;
    border-width: 1px 0;
}

.h-thumb {
    display: flex;
    align-items: center;
    width: 43%;
    padding-left: 18px;
    border-right: 1px solid #aaa;
    background-color: #d8d8d8;
}

.h-scroll button {
    width: 15px;
    border-left: 1px solid #ccc;
}

.feature {
    display: flex;
    flex-direction: column;
    flex: 1;
    margin: 0 4px 0 5px;
}

.feature-page {
    display: flex;
    flex-direction: column;
    align-items: flex-start;
    flex: 1;
    padding: 10px;
    border: 1px solid #a0a0a0;
    background-color: #fff;
}

.feature-head {
    display: flex;
    align-items: center;
    gap: 16px;
}

.feature-head h3 {
    margin: 0;
    font-size: 16px;
    font-weight: normal;
    line-height: 24px;
}

.feature-page p {
    margin: 12px 0 7px 2px;
}

.feature-page label {
    display: flex;
    align-items: center;
    gap: 4px;
    height: 14px;
    margin-bottom: 15px;
}

.feature-page .indent {
    margin-left: 17px;
}

.feature-page input {
    display: grid;
    place-items: center;
    appearance: none;
    width: 12px;
    height: 12px;
    border: 1px solid #666;
    background-color: #fff;
}

.feature-page input:checked::before {
    content: "";
    width: 5px;
    height: 8px;
    margin-bottom: 2px;
    border: 2px solid #111;
    border-width: 0 2px 2px 0;
    transform: rotate(40deg);
}

.view-tabs {
    display: flex;
    align-items: center;
    gap: 2px;
    height: 23px;
    padding-left: 4px;
}

.view-tabs button {
    gap: 3px;
    height: 18px;
    white-space: nowrap;
}

.view-tabs .active {
    padding: 0 4px 0 1px;
    border: 1px solid #5f9fe0;
    background-color: #fff;
}

.actions {
    position: relative;
    width: 169px;
    margin-right: 1px;
    border: 1px solid #a8a8a8;
    background: linear-gradient(to right, #fff, #dedede);
}

.action-list {
    display: flex;
    flex-direction: column;
    padding: 3px 3px 0 4px;
}

.action-list button, .action-list a {
    display: flex;
    align-items: center;
    justify-content: flex-start;
    gap: 6px;
    height: 17px;
}

.action-list button {
    color: #999;
}

.action-list a {
    color: #0b66cc;
}

.action-list .no-icon {
    padding-left: 20px;
}

.action-list hr {
    width: 100%;
    margin: 1px 0 2px;
    border: 0;
    border-top: 1px solid #999;
}

.marker {
    position: absolute;
    top: 11px;
    left: -10px;
    width: 162px;
    height: 150px;
    pointer-events: none;
}

.iis-status {
    display: flex;
    align-items: center;
    justify-content: space-between;
    height: 22px;
    padding-right: 1px;
    background: linear-gradient(to right, #f0f0f0, #fff);
}

/* Taskbar */
.taskbar {
    display: flex;
    gap: 2px;
    height: 34px;
    border: 1px solid #55636b;
    border-width: 1px 1px 2px 0;
    background-color: #65cbea;
}

.start {
    width: 36px;
    padding-right: 4px;
}

.task {
    width: 50px;
}

.open {
    border: 1px solid #3d93b4;
    border-width: 0 1px;
    background-color: #7fd4ee;
}

.current {
    background-color: #a4dff2;
}

.green {
    color: #35a50f;
}

.tray {
    display: flex;
    align-items: center;
    gap: 7px;
    margin-left: auto;
    padding-right: 8px;
}

.clock {
    display: flex;
    flex-direction: column;
    width: 60px;
    text-align: center;
    color: #111;
}

/* Host wallpaper */
.wallpaper {
    width: 11px;
    overflow: hidden;
    border-left: 2px solid #55606a;
    background: linear-gradient(#1460a8, #1b66aa 17%, #235a92 26%, #6a97a8 38%, #46a6c4 43%, #c2bd9c 52%, #7da09c 56%, #3f6b78 64%, #8fb0aa 66%, #46687a 72%, #3f5a5e 76%, #8ea999 80%, #668a94 90%, #3a6f92);
    color: #fff;
}

.wallpaper svg {
    margin-left: 1px;
}

.wallpaper span {
    display: block;
    margin-top: 4px;
}

.vm-bar {
    position: relative;
    display: flex;
    justify-content: space-between;
    width: calc(100% - 9px);
    height: 15px;
    overflow: hidden;
    background-color: #f0f0f0;
}

.vm-bar > span {
    padding-top: 4px;
    font-size: 12px;
    line-height: 16px;
}

.devices {
    display: flex;
    gap: 5px;
    padding-top: 4px;
}

.note {
    margin-right: 13px;
}

.watermark {
    position: fixed;
    right: 15px;
    bottom: 8px;
    font-size: 11px;
    color: #fafafa;
    text-shadow: 1px 1px 1px #555, 0 0 2px #777;
}
```
